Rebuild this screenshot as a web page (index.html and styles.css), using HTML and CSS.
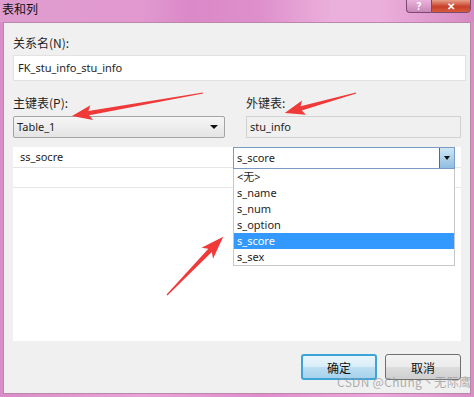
FILE: index.html
```html
<!DOCTYPE html>
<html lang="zh">
<head>
  <meta charset="UTF-8">
  <title>表和列</title>
  <link rel="stylesheet" href="styles.css">
</head>
<body>
  <div class="window">
    <div class="titlebar">
      <span class="title">表和列</span>
      <div class="caption">
        <span class="cap-btn help">?</span>
        <span class="cap-btn close">✕</span>
      </div>
    </div>
    <div class="panel">
      <div class="label first">关系名(N):</div>
      <div class="textbox">FK_stu_info_stu_info</div>
      <div class="tables">
        <div class="col">
          <div class="label">主键表(P):</div>
          <div class="combo">
            <span>Table_1</span>
            <span class="caret"></span>
          </div>
        </div>
        <div class="col">
          <div class="label">外键表:</div>
          <div class="readonly">stu_info</div>
        </div>
      </div>
      <div class="grid">
        <div class="row">
          <div class="cell">ss_socre</div>
          <div class="cell edit">
            <div class="combo active">
              <span>s_score</span>
              <span class="drop-btn"><span class="caret"></span></span>
            </div>
            <ul class="list">
              <li>&lt;无&gt;</li>
              <li>s_name</li>
              <li>s_num</li>
              <li>s_option</li>
              <li class="selected">s_score</li>
              <li>s_sex</li>
            </ul>
          </div>
        </div>
        <div class="row">
          <div class="cell"></div>
          <div class="cell"></div>
        </div>
      </div>
      <div class="buttons">
        <button class="btn default">确定</button>
        <button class="btn">取消</button>
      </div>
    </div>
  </div>

  <div class="watermark">CSDN @Chung丶无际鹰</div>

  <svg class="arrows" width="474" height="397" viewBox="0 0 474 397">
    <g transform="translate(203 93) rotate(170)">
      <polygon points="0,-0.6 116,-2.2 113,-7.5 133,0 113,7.5 116,2.2 0,0.6" />
    </g>
    <g transform="translate(356 93) rotate(164.3)">
      <polygon points="0,-0.6 57,-2.2 54,-7.5 74,0 54,7.5 57,2.2 0,0.6" />
    </g>
    <g transform="translate(167 295) rotate(-46)">
      <polygon points="0,-0.6 62,-2.4 58,-8 81,0 58,8 62,2.4 0,0.6" />
    </g>
  </svg>
</body>
</html>
```

FILE: styles.css
```css
* {
  margin: 0;
  padding: 0;
  box-sizing: border-box;
}

html,
body {
  width: 100%;
  height: 100%;
  overflow: hidden;
}

body {
  position: relative;
  font-family: "Noto Sans", "Noto Sans CJK SC", sans-serif;
  font-size: 11px;
  color: #1e1e1e;
  background: linear-gradient(90deg, #d98cc6 0%, #e9a3d6 30%, #e08ccb 55%, #eaa6d8 80%, #d890c5 100%);
}

.window {
  height: 397px;
  display: flex;
  flex-direction: column;
  padding: 0 3px;
}

/* title bar */
.titlebar {
  height: 22px;
  display: flex;
  justify-content: space-between;
  align-items: flex-start;
  background: linear-gradient(90deg, rgba(255,255,255,.15), rgba(160,40,140,.15) 40%, rgba(255,255,255,.2) 70%, rgba(200,80,170,.1));
  margin: 0 -3px;
  padding: 0 3px 0 2px;
}

.title {
  font-family: "Noto Sans CJK SC", sans-serif;
  font-size: 12px;
  line-height: 18px;
  color: #111;
}

.caption {
  display: flex;
  margin-top: -1px;
}

.cap-btn {
  height: 14px;
  line-height: 13px;
  text-align: center;
  color: #fff;
  font-weight: bold;
  border: 1px solid #7a4a6e;
}

.help {
  width: 25px;
  font-size: 10px;
  border-radius: 0 0 0 4px;
  border-right: none;
  background: linear-gradient(#eab3db, #c987b9);
}

.close {
  width: 40px;
  font-size: 10px;
  border-radius: 0 0 4px 0;
  background: linear-gradient(#e8a08a, #c7402a 55%, #d65a3c);
}

/* content panel */
.panel {
  flex: 1;
  background-color: #f0f0f0;
  border: 1px solid #b986ac;
  padding: 0 9px;
  margin-bottom: 3px;
  display: flex;
  flex-direction: column;
}

.label {
  line-height: 16px;
  font-family: "Noto Sans CJK SC", sans-serif;
  font-size: 12px;
  margin-bottom: 5px;
}

.label.first {
  margin-top: 12px;
  margin-bottom: 4px;
}

.textbox {
  height: 26px;
  line-height: 24px;
  margin-right: -5px;
  padding-left: 4px;
  background-color: #fff;
  border: 1px solid #e2e2e2;
}

.tables {
  display: grid;
  grid-template-columns: 212px 1fr;
  column-gap: 21px;
  margin-top: 14px;
}

.combo {
  height: 22px;
  line-height: 20px;
  padding-left: 3px;
  display: flex;
  justify-content: space-between;
  align-items: center;
  border: 1px solid #a4a4a4;
  border-radius: 2px;
  background: linear-gradient(#f6f6f6, #e4e4e4);
}

.caret {
  width: 0;
  height: 0;
  margin-right: 6px;
  border-left: 4px solid transparent;
  border-right: 4px solid transparent;
  border-top: 4px solid #111;
}

.readonly {
  height: 22px;
  line-height: 20px;
  padding-left: 3px;
  border: 1px solid #d2d2d2;
  background-color: #f0f0f0;
}

/* grid */
.grid {
  height: 194px;
  margin-top: 9px;
  background-color: #fff;
}

.row {
  display: grid;
  grid-template-columns: 220px 1fr;
  height: 21px;
  border-bottom: 1px solid #e6e6e6;
}

.row + .row {
  height: 20px;
}

.cell {
  line-height: 20px;
  padding-left: 7px;
  position: relative;
}

.cell.edit {
  padding: 0 6px 0 0;
}

.combo.active {
  height: 22px;
  border-color: #7a9cc4;
  border-radius: 0;
  background: #fff;
}

.drop-btn {
  width: 15px;
  height: 20px;
  display: flex;
  align-items: center;
  justify-content: center;
  border-left: 1px solid #3d6f9e;
  background: linear-gradient(#cfe6f6, #8fbde0);
}

.drop-btn .caret {
  margin: 0;
  border-left-width: 3px;
  border-right-width: 3px;
  border-top-width: 4px;
}

.list {
  position: absolute;
  left: 0;
  right: 6px;
  top: 22px;
  list-style: none;
  background-color: #fff;
  border: 1px solid #c8c8c8;
  border-top: none;
  z-index: 2;
}

.list li {
  height: 16px;
  line-height: 16px;
  padding-left: 3px;
}

.list li.selected {
  background-color: #3399ff;
  color: #fff;
}

/* buttons */
.buttons {
  display: flex;
  justify-content: flex-end;
  gap: 8px;
  margin-top: 13px;
}

.btn {
  width: 76px;
  height: 26px;
  font-family: "Noto Sans CJK SC", sans-serif;
  font-size: 12px;
  color: #111;
  border: 1px solid #707070;
  border-radius: 3px;
  background: linear-gradient(#f2f2f2 0%, #ebebeb 50%, #dddddd 51%, #cfcfcf 100%);
}

.btn.default {
  border: 2px solid #3ca4d6;
  background: linear-gradient(#eaf5fb 0%, #d9edf8 50%, #bedff3 51%, #a7d2ec 100%);
}

.watermark {
  position: absolute;
  left: 337px;
  top: 373px;
  font-family: "Noto Sans CJK SC", sans-serif;
  font-size: 12px;
  color: rgba(150, 150, 150, .75);
  letter-spacing: .3px;
}

.arrows {
  position: absolute;
  left: 0;
  top: 0;
  pointer-events: none;
}

.arrows polygon {
  fill: #f03a3a;
}
```
